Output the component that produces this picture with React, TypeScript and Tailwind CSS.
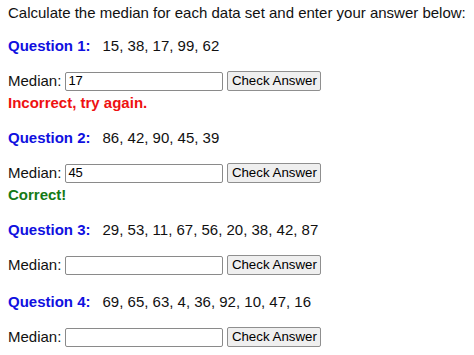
import React from 'react';

interface Item {
  id: number;
  data: number[];
  value: string;
  feedback?: { text: string; ok: boolean };
}

const items: Item[] = [
  { id: 1, data: [15, 38, 17, 99, 62], value: '17', feedback: { text: 'Incorrect, try again.', ok: false } },
  { id: 2, data: [86, 42, 90, 45, 39], value: '45', feedback: { text: 'Correct!', ok: true } },
  { id: 3, data: [29, 53, 11, 67, 56, 20, 38, 42, 87], value: '' },
  { id: 4, data: [69, 65, 63, 4, 36, 92, 10, 47, 16], value: '' },
];

function Question({ item, first }: { item: Item; first: boolean }): React.ReactElement {
  return (
    <div className={first ? 'mt-[15px]' : 'mt-[17px]'}>
      <div className="leading-[18px]">
        <span className="mr-[12px] font-bold text-[#1010e0]">Question {item.id}:</span>
        <span>{item.data.join(', ')}</span>
      </div>
      <div className="mt-[15px] flex h-[22px] items-center">
        <span>Median:</span>
        <input
          type="text"
          defaultValue={item.value}
          className="ml-[4px] h-[19px] w-[158px] rounded-[2px] border border-[#8a8a8a] bg-white px-[2px] text-[13px] text-black outline-none"
        />
        <button
          type="button"
          className="ml-[4px] h-[20px] w-[94px] rounded-[2px] border border-[#8f8f8f] bg-[#efefef] text-[13.3px] leading-none text-black"
        >
          Check Answer
        </button>
      </div>
      {item.feedback ? (
        <div
          className={`mb-[3px] mt-[2px] font-bold leading-[18px] ${
            item.feedback.ok ? 'text-[#157a15]' : 'text-[#ee1111]'
          }`}
        >
          {item.feedback.text}
        </div>
      ) : null}
    </div>
  );
}

export default function App(): React.ReactElement {
  return (
    <div
      className="min-h-screen bg-white pl-[8px] pt-[4px] text-[15px] text-[#111]"
      style={{ fontFamily: '"Liberation Sans", Arial, sans-serif' }}
    >
      <div className="whitespace-nowrap leading-[18px]">
        Calculate the median for each data set and enter your answer below:
      </div>
      {items.map((item, i) => (
        <Question key={item.id} item={item} first={i === 0} />
      ))}
    </div>
  );
}
